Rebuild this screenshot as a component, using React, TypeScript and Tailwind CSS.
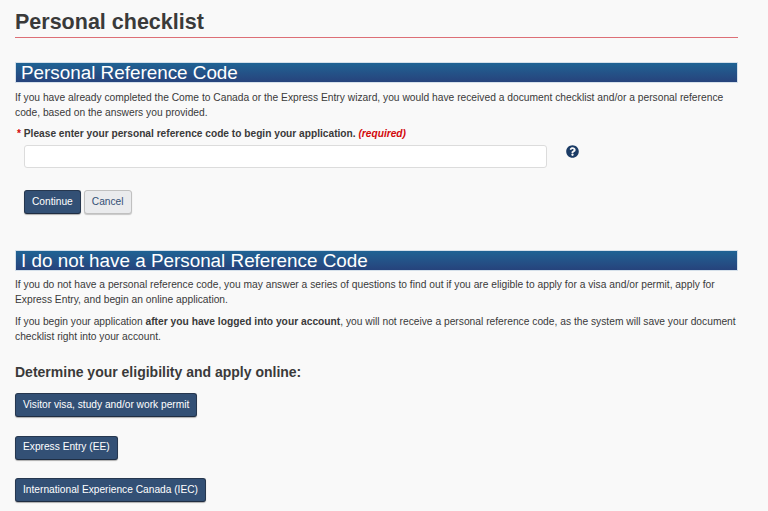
import { FaQuestionCircle } from "react-icons/fa";

function BlueButton({ children }: { children: string }) {
  return (
    <button className="h-6 rounded-[3px] border border-[#26374f] border-b-[#1f2d42] bg-[#335075] px-[7px] text-[10.2px] leading-none text-white shadow-[0_1px_1px_rgba(0,0,0,0.3)]">
      {children}
    </button>
  );
}

function SectionBar({ children }: { children: string }) {
  return (
    <h2 className="h-[21px] border border-[#d5e0ea] bg-gradient-to-b from-[#1f6394] to-[#26437c] pl-[5px] text-[18.85px] leading-[20px] text-white">
      {children}
    </h2>
  );
}

export default function App() {
  return (
    <div className="h-[511px] overflow-hidden bg-[#f9f9f9] pl-[15px] pr-[30px] font-['Liberation_Sans',Arial,sans-serif] text-[#3a3a3a]">
      {/* Page title */}
      <h1 className="pt-[9px] text-[21.5px] font-bold leading-[26px]">Personal checklist</h1>
      <div className="mt-[2px] h-px bg-[#dd6f76]" />

      {/* Reference code */}
      <div className="mt-[24px]">
        <SectionBar>Personal Reference Code</SectionBar>
        <p className="mt-[8px] text-[10.25px] leading-[14.5px]">
          If you have already completed the Come to Canada or the Express Entry wizard, you would have received a document checklist and/or a personal reference code, based on the answers you provided.
        </p>
        <p className="mt-[6px] pl-[2px] text-[10.18px] font-bold leading-[15px]">
          <span className="text-[#d3080c]">* </span>
          Please enter your personal reference code to begin your application.{" "}
          <em className="text-[#d3080c]">(required)</em>
        </p>
        <div className="mt-[4px] flex items-start pl-[9px]">
          <input className="h-[23px] w-[523px] rounded-[3px] border border-[#dcdcdc] bg-white" />
          <FaQuestionCircle className="ml-[19px] text-[13px] text-[#1c3c66]" />
        </div>
        <div className="mt-[22px] flex gap-[3px] pl-[9px]">
          <BlueButton>Continue</BlueButton>
          <button className="h-6 rounded-[3px] border border-[#c0c0c0] bg-[#eaebed] px-[7px] text-[10.2px] leading-none text-[#335075] shadow-[0_1px_1px_rgba(0,0,0,0.2)]">
            Cancel
          </button>
        </div>
      </div>

      {/* No reference code */}
      <div className="mt-[36px]">
        <SectionBar>I do not have a Personal Reference Code</SectionBar>
        <p className="mt-[7px] text-[10.25px] leading-[14.5px]">
          If you do not have a personal reference code, you may answer a series of questions to find out if you are eligible to apply for a visa and/or permit, apply for Express Entry, and begin an online application.
        </p>
        <p className="mt-[8px] text-[10.25px] leading-[14.5px]">
          If you begin your application <strong>after you have logged into your account</strong>, you will not receive a personal reference code, as the system will save your document checklist right into your account.
        </p>
        <h3 className="mt-[19px] text-[14px] font-bold leading-[18px]">Determine your eligibility and apply online:</h3>
        <div className="mt-[12px] flex flex-col items-start gap-[18.5px]">
          <BlueButton>Visitor visa, study and/or work permit</BlueButton>
          <BlueButton>Express Entry (EE)</BlueButton>
          <BlueButton>International Experience Canada (IEC)</BlueButton>
        </div>
      </div>
    </div>
  );
}
